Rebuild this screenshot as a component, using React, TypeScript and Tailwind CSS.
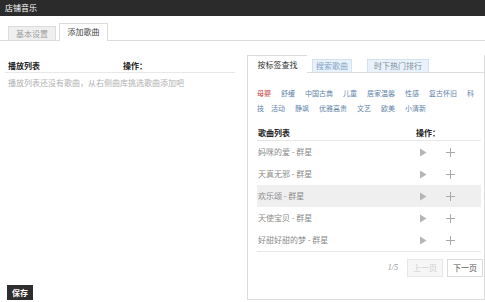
import React from 'react';

const tagsLine1 = ['舒缓', '中国古典', '儿童', '居家温馨', '性感', '复古怀旧', '科'];
const tagsLine2 = ['活动', '静飒', '优雅高贵', '文艺', '欧美', '小清新'];

const songs = ['妈咪的爱 - 群星', '天真无邪 - 群星', '欢乐颂 - 群星', '天使宝贝 - 群星', '好甜好甜的梦 - 群星'];

const PlayIcon = () => (
  <svg width="8" height="9" viewBox="0 0 8 9">
    <path d="M1 0.5 L7.5 4.5 L1 8.5 Z" fill="#b5b5b5" />
  </svg>
);

const PlusIcon = () => (
  <svg width="9" height="9" viewBox="0 0 9 9">
    <path d="M4.5 0 V9 M0 4.5 H9" stroke="#aaa" strokeWidth="1" />
  </svg>
);

export default function App() {
  return (
    <div className="w-[485px] h-[302px] flex flex-col bg-white overflow-hidden font-['Noto_Sans_CJK_SC','Noto_Sans',sans-serif] text-[8px] leading-none">
      {/* title bar */}
      <div className="h-[16px] bg-[#2b2b2b] text-white flex items-center px-[5px] text-[8px]">店铺音乐</div>

      {/* top tabs */}
      <div className="h-[25px] border-b border-[#dcdcdc] flex items-end pl-[8px] gap-[3px]">
        <div className="w-[48px] h-[14px] bg-[#efefef] border border-b-0 border-[#dcdcdc] text-[#a0a0a0] flex items-center justify-center">基本设置</div>
        <div className="w-[49px] h-[18px] bg-white border border-b-0 border-[#dcdcdc] text-[#444] flex items-center justify-center -mb-px pb-px">添加歌曲</div>
      </div>

      <div className="flex flex-1">
        {/* playlist */}
        <div className="w-[240px] flex flex-col justify-between pb-[2px]">
          <div>
            <div className="mt-[19px] mx-[5px] pl-[3px] h-[13px] border-b border-[#e8e8e8] flex items-center font-bold text-[#222]">
              <span className="w-[115px]">播放列表</span>
              <span>操作：</span>
            </div>
            <div className="mt-[6px] pl-[8px] text-[#b0b0b0]">播放列表还没有歌曲，从右侧曲库挑选歌曲添加吧</div>
          </div>
          <div className="ml-[7px] w-[26px] h-[15px] bg-[#2e2e2e] text-white font-bold flex items-center justify-center">保存</div>
        </div>

        {/* library */}
        <div className="ml-[7px] mt-[14px] mb-[2px] flex-1 border-l border-b border-r border-[#dcdcdc] flex flex-col">
          <div className="h-[18px] flex">
            <div className="w-[59px] border-t border-[#dcdcdc] flex items-center justify-center text-[#333]">按标签查找</div>
            <div className="flex-1 border-b border-[#dcdcdc] flex items-end">
              <div className="ml-[5px] w-[40px] h-[13px] bg-[#e9f2fb] border border-b-0 border-[#d2e2f0] text-[#7fa3c4] flex items-center justify-center">搜索歌曲</div>
              <div className="ml-[15px] w-[62px] h-[13px] bg-[#e9f2fb] border border-b-0 border-[#d2e2f0] text-[#7e8e9e] flex items-center justify-center">时下热门排行</div>
            </div>
          </div>

          <div className="mt-[13px] pl-[9px] text-[7px]">
            <div className="h-[15px] flex items-center gap-[10px] text-[#5f83aa]">
              <span className="text-[#c6403a]">母婴</span>
              {tagsLine1.map((t) => (
                <span key={t}>{t}</span>
              ))}
            </div>
            <div className="h-[15px] flex items-center gap-[10px] text-[#5f83aa]">
              <span className="-mr-[3px]">技</span>
              {tagsLine2.map((t) => (
                <span key={t}>{t}</span>
              ))}
            </div>
          </div>

          <div className="mt-[10px] ml-[9px] mr-[3px]">
            <div className="h-[15px] border-b border-[#e6e6e6] flex items-center font-bold text-[#222] pl-px">
              <span className="w-[158px]">歌曲列表</span>
              <span>操作：</span>
            </div>
            <div className="border-b border-[#e6e6e6]">
              {songs.map((s, i) => (
                <div key={s} className={`h-[22px] flex items-center text-[#8a8a8a] pl-px ${i === 2 ? 'bg-[#efefef]' : ''}`}>
                  <span className="w-[161px]">{s}</span>
                  <PlayIcon />
                  <span className="ml-[19px]">
                    <PlusIcon />
                  </span>
                </div>
              ))}
            </div>
          </div>

          <div className="mt-[7px] flex items-center justify-end pr-[1px]">
            <span className="italic text-[#999] font-['Liberation_Serif',serif] text-[8px] mr-[9px]">1/5</span>
            <div className="w-[36px] h-[18px] bg-[#f6f6f6] border border-[#e6e6e6] text-[#cfcfcf] flex items-center justify-center mr-[4px]">上一页</div>
            <div className="w-[36px] h-[18px] bg-white border border-[#dcdcdc] text-[#555] flex items-center justify-center">下一页</div>
          </div>
        </div>
      </div>
    </div>
  );
}
